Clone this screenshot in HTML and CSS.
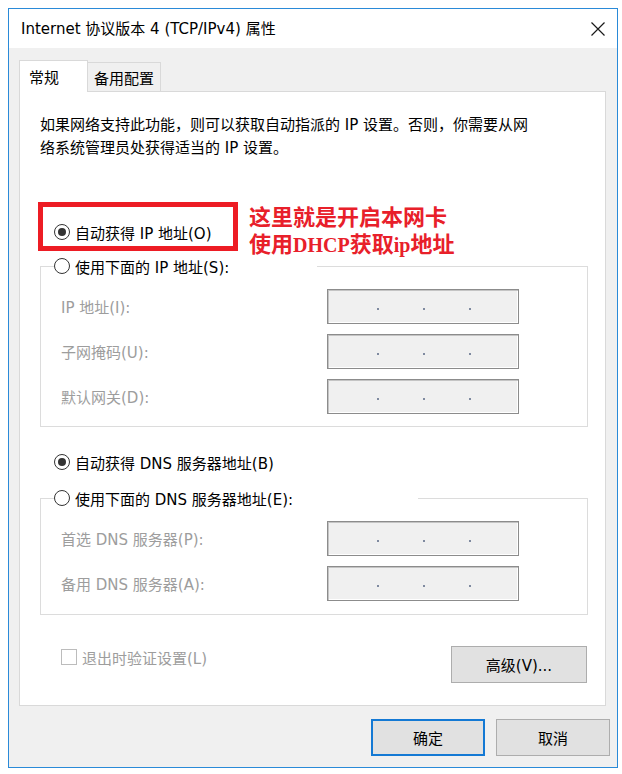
FILE: index.html
```html
<!DOCTYPE html>
<html lang="zh-CN">
<head>
<meta charset="utf-8">
<title>Internet 协议版本 4 (TCP/IPv4) 属性</title>
<link rel="stylesheet" href="styles.css">
</head>
<body>
<div class="window">
  <div class="titlebar">
    <span class="title">Internet 协议版本 4 (TCP/IPv4) 属性</span>
    <svg class="close" width="14" height="14" viewBox="0 0 14 14"><path d="M0.5 0.5 L13.5 13.5 M13.5 0.5 L0.5 13.5" stroke="#1a1a1a" stroke-width="1.2" fill="none"/></svg>
  </div>
  <div class="client">
    <div class="tabs">
      <div class="tab active">常规</div>
      <div class="tab">备用配置</div>
    </div>
    <div class="panel">
      <p class="intro">如果网络支持此功能，则可以获取自动指派的 IP 设置。否则，你需要从网<br>络系统管理员处获得适当的 IP 设置。</p>

      <div class="radio-row auto-ip"><span class="radio checked"></span><span>自动获得 IP 地址(O)</span></div>

      <div class="group">
        <div class="legend legend-ip"><span class="radio"></span><span>使用下面的 IP 地址(S):</span></div>
        <div class="field first"><span class="label">IP 地址(I):</span><div class="ipbox"><i></i><i></i><i></i></div></div>
        <div class="field"><span class="label">子网掩码(U):</span><div class="ipbox"><i></i><i></i><i></i></div></div>
        <div class="field"><span class="label">默认网关(D):</span><div class="ipbox"><i></i><i></i><i></i></div></div>
      </div>

      <div class="radio-row auto-dns"><span class="radio checked"></span><span>自动获得 DNS 服务器地址(B)</span></div>

      <div class="group dns">
        <div class="legend legend-dns"><span class="radio"></span><span>使用下面的 DNS 服务器地址(E):</span></div>
        <div class="field first"><span class="label">首选 DNS 服务器(P):</span><div class="ipbox"><i></i><i></i><i></i></div></div>
        <div class="field"><span class="label">备用 DNS 服务器(A):</span><div class="ipbox"><i></i><i></i><i></i></div></div>
      </div>

      <div class="bottom-row">
        <div class="check"><span class="box"></span><span>退出时验证设置(L)</span></div>
        <button class="btn advanced">高级(V)...</button>
      </div>

      <div class="annot-box"></div>
      <div class="annot-text">
        <div class="annot-line">这里就是开启本网卡</div>
        <div class="annot-line">使用<span class="latin">DHCP</span>获取<span class="latin">ip</span>地址</div>
      </div>
    </div>
    <div class="dialog-buttons">
      <button class="btn ok">确定</button>
      <button class="btn">取消</button>
    </div>
  </div>
</div>
</body>
</html>
```

FILE: styles.css
```css
* { box-sizing: border-box; }

body {
  margin: 0;
  background: #ffffff;
  font-family: "DejaVu Sans", "Noto Sans CJK SC", sans-serif;
  font-size: 15px;
  color: #000;
}

.window {
  margin: 8px 0 0 8px;
  width: 610px;
  height: 760px;
  border: 1px solid #2a8ad8;
  background: #f0f0f0;
  display: flex;
  flex-direction: column;
}

.titlebar {
  height: 39px;
  flex: none;
  background: #fff;
  display: flex;
  align-items: center;
  justify-content: space-between;
  padding: 0 12px 0 12px;
}

.title { line-height: 20px; }

.close { display: block; }

.client {
  flex: 1;
  padding: 12px 0 0 10px;
}

.tabs {
  display: flex;
  align-items: flex-end;
  height: 32px;
  margin-bottom: -1px;
  position: relative;
  z-index: 1;
}

.tab {
  height: 30px;
  width: 74px;
  margin-left: -1px;
  border: 1px solid #d9d9d9;
  background: #f0f0f0;
  display: flex;
  align-items: center;
  justify-content: center;
}

.tab.active {
  height: 32px;
  width: 69px;
  margin-left: 0;
  border-bottom: none;
  background: #fff;
  justify-content: flex-start;
  padding-left: 9px;
  padding-bottom: 1px;
  position: relative;
  z-index: 2;
}

.panel {
  width: 587px;
  height: 615px;
  border: 1px solid #d9d9d9;
  background: #fff;
  position: relative;
  padding: 22px 0 0 20px;
}

.intro {
  margin: 0;
  line-height: 23px;
}

.radio-row {
  display: flex;
  align-items: center;
  gap: 5px;
  height: 20px;
  margin-left: 14px;
}

.auto-ip { margin-top: 62px; }
.auto-dns { margin-top: 25px; }

.radio {
  width: 16px;
  height: 16px;
  border: 1px solid #333;
  border-radius: 50%;
  background: #fff;
  display: flex;
  align-items: center;
  justify-content: center;
  flex: none;
}

.radio.checked::after {
  content: "";
  width: 8px;
  height: 8px;
  border-radius: 50%;
  background: #333;
}

.group {
  width: 548px;
  margin-top: 24px;
  border: 1px solid #dcdcdc;
  padding: 0 0 12px 20px;
}

.group.dns {
  margin-top: 26px;
  padding-bottom: 13px;
}

.legend {
  display: flex;
  align-items: center;
  gap: 5px;
  height: 20px;
  margin-top: -11px;
  margin-left: -7px;
  background: #fff;
}

.legend-ip { width: 263px; }
.legend-dns { width: 364px; }

.field {
  display: flex;
  align-items: center;
  height: 35px;
  margin-top: 10px;
}

.field.first { margin-top: 13px; }

.label {
  width: 266px;
  color: #9d9d9d;
  flex: none;
}

.ipbox {
  width: 192px;
  height: 35px;
  background: #f0f0f0;
  border: 1px solid #8c8c8c;
  box-shadow: inset 1px 1px 0 #c4c4c4, inset -1px -1px 0 #ffffff;
  display: flex;
  align-items: flex-start;
  gap: 44px;
  padding: 18px 0 0 49px;
}

.ipbox i {
  display: block;
  width: 2px;
  height: 2px;
  background: #7f8aa0;
}

.bottom-row {
  width: 547px;
  margin-top: 31px;
  display: flex;
  justify-content: space-between;
  align-items: flex-start;
}

.check {
  display: flex;
  align-items: center;
  gap: 5px;
  height: 16px;
  margin: 3px 0 0 21px;
  color: #9d9d9d;
}

.check .box {
  width: 16px;
  height: 16px;
  border: 1px solid #bcbcbc;
  background: #fff;
}

.btn {
  font-family: "DejaVu Sans", "Noto Sans CJK SC", sans-serif;
  font-size: 15px;
  color: #000;
  background: #e1e1e1;
  border: 1px solid #adadad;
  padding: 0;
  margin: 0;
}

.advanced {
  width: 136px;
  height: 37px;
}

.dialog-buttons {
  display: flex;
  justify-content: flex-end;
  gap: 11px;
  margin-top: 13px;
  padding-right: 7px;
}

.dialog-buttons .btn {
  width: 114px;
  height: 37px;
}

.btn.ok {
  border: 2px solid #1479d4;
}

.annot-box {
  position: absolute;
  left: 18px;
  top: 110px;
  width: 200px;
  height: 49px;
  border: 5px solid #ed1c24;
}

.annot-text {
  position: absolute;
  left: 229px;
  top: 110px;
  font-family: "Noto Sans CJK SC", sans-serif;
  font-size: 22px;
  font-weight: 700;
  color: #e8202a;
  white-space: nowrap;
}

.annot-line {
  height: 27px;
  line-height: 27px;
}

.annot-text .latin {
  font-family: "Liberation Serif", serif;
  font-size: 20px;
}
```
